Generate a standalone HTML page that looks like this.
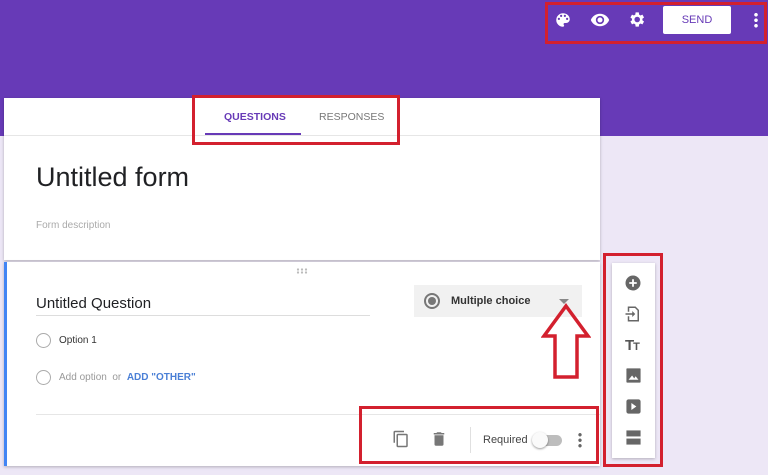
<!DOCTYPE html>
<html><head><style>
*{margin:0;padding:0;box-sizing:border-box}
body{width:768px;height:475px;overflow:hidden;background:#ede7f6;font-family:"Liberation Sans",sans-serif;position:relative}
.hdr{position:absolute;left:0;top:0;width:768px;height:136px;background:#673ab7}
.abs{position:absolute}
.red{position:absolute;border:3px solid #d3202e}
.card{position:absolute;background:#fff;box-shadow:0 1px 3px rgba(0,0,0,.25)}
</style></head><body>
<div class="hdr"></div>
<svg class="abs" style="left:554px;top:11px" width="18" height="18" viewBox="0 0 24 24"><path fill="#fff" d="M12 3a9 9 0 000 18c.8 0 1.5-.7 1.5-1.5 0-.4-.1-.7-.4-1-.2-.3-.4-.6-.4-1 0-.8.7-1.5 1.5-1.5H16c2.8 0 5-2.2 5-5 0-4.4-4-8-9-8zm-5.5 9a1.5 1.5 0 110-3 1.5 1.5 0 010 3zm3-4a1.5 1.5 0 110-3 1.5 1.5 0 010 3zm5 0a1.5 1.5 0 110-3 1.5 1.5 0 010 3zm3 4a1.5 1.5 0 110-3 1.5 1.5 0 010 3z"/></svg>
<svg class="abs" style="left:590px;top:10px" width="20" height="20" viewBox="0 0 24 24"><path fill="#fff" d="M12 4.5C7 4.5 2.7 7.6 1 12c1.7 4.4 6 7.5 11 7.5s9.3-3.1 11-7.5c-1.7-4.4-6-7.5-11-7.5zM12 17a5 5 0 110-10 5 5 0 010 10zm0-8a3 3 0 100 6 3 3 0 000-6z"/></svg>
<svg class="abs" style="left:627px;top:10px" width="19" height="19" viewBox="0 0 24 24"><path fill="#fff" d="M19.4 13a7.5 7.5 0 000-2l2.1-1.6-2-3.5-2.5 1a7 7 0 00-1.7-1L14.9 3h-4l-.4 2.9a7 7 0 00-1.7 1l-2.5-1-2 3.5L6.4 11a7.5 7.5 0 000 2l-2.1 1.6 2 3.5 2.5-1a7 7 0 001.7 1l.4 2.9h4l.4-2.9a7 7 0 001.7-1l2.5 1 2-3.5zM12.9 15.5a3.5 3.5 0 110-7 3.5 3.5 0 010 7z"/></svg>
<div class="abs" style="left:663px;top:6px;width:68px;height:28px;background:#fff;border-radius:2px;color:#673ab7;font-size:11px;text-align:center;line-height:28px">SEND</div>
<div class="abs" style="left:754px;top:12px;width:4px;height:16px;background:radial-gradient(circle,#fff 1.6px,transparent 2px) 0 0/4px 5.5px"></div>
<div class="red" style="left:545px;top:2px;width:222px;height:42px"></div>
<div class="card" style="left:4px;top:98px;width:596px;height:162px"></div>
<div class="abs" style="left:4px;top:135px;width:596px;height:1px;background:#e6e6e6"></div>
<div class="abs" style="left:224px;top:111px;font-size:10.5px;color:#673ab7;font-weight:bold">QUESTIONS</div>
<div class="abs" style="left:205px;top:133px;width:96px;height:2px;background:#673ab7"></div>
<div class="abs" style="left:319px;top:111px;font-size:10.5px;color:#777">RESPONSES</div>
<div class="red" style="left:192px;top:95px;width:208px;height:50px"></div>
<div class="abs" style="left:36px;top:162px;font-size:27px;color:#202124">Untitled form</div>
<div class="abs" style="left:36px;top:220px;font-size:10px;color:#aaa">Form description</div>
<div class="card" style="left:4px;top:262px;width:596px;height:204px;border-left:3px solid #4285f4"></div>
<div class="abs" style="left:296px;top:268px;width:12px;height:6px;background:radial-gradient(circle,#bbb 1px,transparent 1.3px) 0 0/4px 3px"></div>
<div class="abs" style="left:36px;top:295px;font-size:15px;color:#202124">Untitled Question</div>
<div class="abs" style="left:36px;top:315px;width:334px;height:1px;background:#ddd"></div>
<div class="abs" style="left:414px;top:285px;width:168px;height:32px;background:#f1f1f1"></div>
<div class="abs" style="left:424px;top:293px;width:16px;height:16px;border:2px solid #777;border-radius:50%"></div>
<div class="abs" style="left:428px;top:297px;width:8px;height:8px;background:#777;border-radius:50%"></div>
<div class="abs" style="left:451px;top:295px;font-size:11px;color:#333;font-weight:bold">Multiple choice</div>
<div class="abs" style="left:559px;top:299px;width:0;height:0;border-left:5px solid transparent;border-right:5px solid transparent;border-top:5px solid #888"></div>
<div class="abs" style="left:36px;top:333px;width:15px;height:15px;border:1.5px solid #aaa;border-radius:50%"></div>
<div class="abs" style="left:59px;top:335px;font-size:10px;color:#333">Option 1</div>
<div class="abs" style="left:36px;top:370px;width:15px;height:15px;border:1.5px solid #aaa;border-radius:50%"></div>
<div class="abs" style="left:59px;top:372px;font-size:10px;color:#999">Add option &nbsp;or &nbsp;<b style="color:#4a7fd6">ADD "OTHER"</b></div>
<div class="abs" style="left:36px;top:414px;width:564px;height:1px;background:#e6e6e6"></div>
<svg class="abs" style="left:541px;top:303px" width="50" height="77" viewBox="0 0 50 77"><path d="M25 3 L47 33 L36 33 L36 74 L14 74 L14 33 L3 33 Z" fill="none" stroke="#d3202e" stroke-width="3.5"/></svg>
<svg class="abs" style="left:392px;top:429px" width="18" height="20" viewBox="0 0 24 24"><path fill="#777" d="M16 1H4a2 2 0 00-2 2v14h2V3h12zm3 4H8a2 2 0 00-2 2v14a2 2 0 002 2h11a2 2 0 002-2V7a2 2 0 00-2-2zm0 16H8V7h11z"/></svg>
<svg class="abs" style="left:430px;top:430px" width="18" height="18" viewBox="0 0 24 24"><path fill="#777" d="M6 19a2 2 0 002 2h8a2 2 0 002-2V7H6zM19 4h-3.5l-1-1h-5l-1 1H5v2h14z"/></svg>
<div class="abs" style="left:470px;top:427px;width:1px;height:26px;background:#e0e0e0"></div>
<div class="abs" style="left:483px;top:434px;font-size:11px;color:#444">Required</div>
<div class="abs" style="left:535px;top:435px;width:27px;height:11px;background:#bdbdbd;border-radius:6px"></div>
<div class="abs" style="left:532px;top:432px;width:16px;height:16px;background:#fafafa;border-radius:50%;box-shadow:0 1px 2px rgba(0,0,0,.4)"></div>
<div class="abs" style="left:578px;top:432px;width:4px;height:16px;background:radial-gradient(circle,#666 1.5px,transparent 1.9px) 0 0/4px 5.5px"></div>
<div class="red" style="left:359px;top:406px;width:240px;height:58px"></div>
<div class="card" style="left:612px;top:263px;width:43px;height:195px"></div>
<svg class="abs" style="left:624px;top:274px" width="18" height="18" viewBox="0 0 24 24"><circle cx="12" cy="12" r="10" fill="#666"/><path d="M12 7v10M7 12h10" stroke="#fff" stroke-width="2.4"/></svg>
<svg class="abs" style="left:624px;top:305px" width="18" height="18" viewBox="0 0 24 24"><path fill="none" stroke="#666" stroke-width="2" d="M6 9V3h9l4 4v14H6v-6"/><path fill="#666" d="M2 11h9V8l4 4-4 4v-3H2z"/></svg>
<div class="abs" style="left:625px;top:337px;font-size:15px;font-weight:bold;color:#555;letter-spacing:-1px">T<span style="font-size:11px">T</span></div>
<svg class="abs" style="left:625px;top:367px" width="17" height="17" viewBox="0 0 24 24"><rect x="2" y="2" width="20" height="20" rx="1" fill="#666"/><path d="M5 18l5-6 3 4 2-3 4 5z" fill="#fff"/></svg>
<svg class="abs" style="left:625px;top:398px" width="17" height="17" viewBox="0 0 24 24"><rect x="2" y="2" width="20" height="20" rx="3" fill="#666"/><path d="M9 7l7 5-7 5z" fill="#fff"/></svg>
<svg class="abs" style="left:625px;top:429px" width="17" height="17" viewBox="0 0 24 24"><rect x="2" y="2" width="20" height="8.5" fill="#666"/><rect x="2" y="13.5" width="20" height="8.5" fill="#666"/></svg>
<div class="red" style="left:603px;top:253px;width:60px;height:214px"></div>
</body></html>
